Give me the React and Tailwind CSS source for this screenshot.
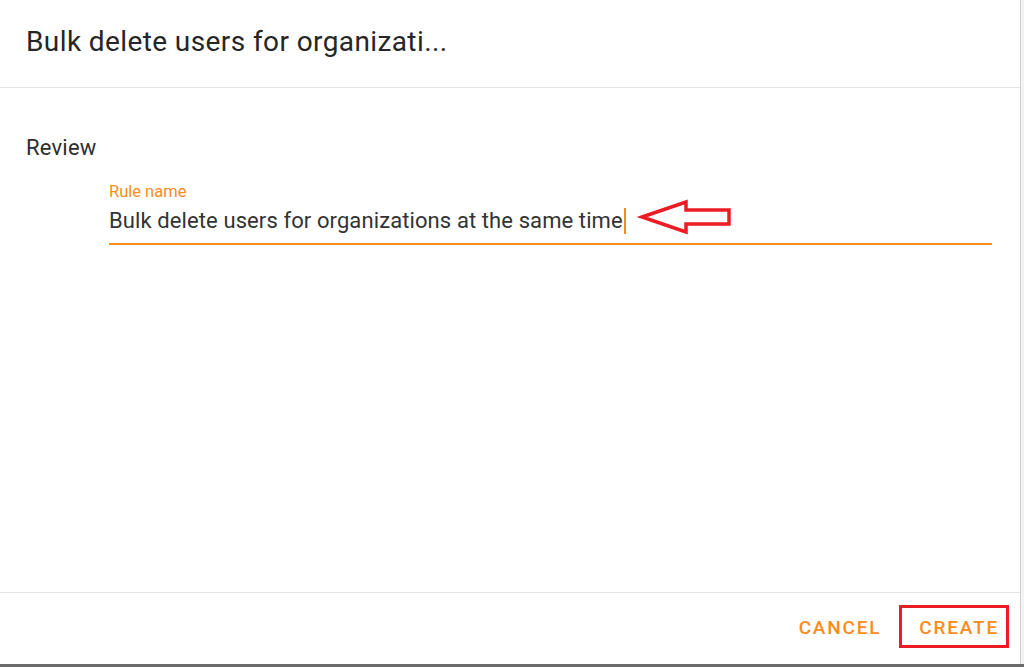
import React from "react";

export default function App() {
  const orange = "text-[#fb8c1c]";
  return (
    <div className="w-[1024px] h-[667px] flex flex-col bg-white overflow-hidden" style={{ fontFamily: "Roboto, 'Liberation Sans', sans-serif" }}>
      <div className="flex flex-1 min-h-0">
        <div className="relative flex flex-col flex-1 min-w-0 bg-white">
          {/* Header */}
          <div className="h-[88px] shrink-0 border-b border-[#e3e3e3] flex items-center pl-[26px] pb-[4px]">
            <h1 className="text-[28px] tracking-[0.4px] text-[#262626] leading-none">Bulk delete users for organizati...</h1>
          </div>
          {/* Body */}
          <div className="flex-1 flex flex-col">
            <div className="pl-[26px] pt-[49px] text-[22px] tracking-[0.2px] leading-none text-[#2e2e2e]">Review</div>
            <div className="ml-[109px] mr-[28px] mt-[25px] flex flex-col">
              <label className={`text-[16.5px] leading-none ${orange}`}>Rule name</label>
              <div className="mt-[7px] pb-[9px] border-b-2 border-[#fb8c1c] flex items-center">
                <span className="text-[22px] tracking-[0.1px] leading-[26px] text-[#333333]">Bulk delete users for organizations at the same time</span>
                <span className="w-[2px] h-[26px] bg-[#fb8c1c] ml-[1px]" />
              </div>
            </div>
          </div>
          {/* Footer */}
          <div className="h-[72px] shrink-0 border-t border-[#e3e3e3] flex items-center justify-end pr-[21px] gap-[38px]">
            <span className={`text-[19px] font-medium tracking-[1.8px] ${orange}`}>CANCEL</span>
            <span className={`text-[19px] font-medium tracking-[1.8px] ${orange}`}>CREATE</span>
          </div>

          {/* Annotation: arrow */}
          <svg className="absolute left-[636px] top-[197px]" width="100" height="42" viewBox="0 0 100 42">
            <polygon
              points="6,20 50,5 50,13 93,13 93,27 50,27 50,35"
              fill="none"
              stroke="#ec1c24"
              strokeWidth="3.5"
              strokeLinejoin="miter"
            />
          </svg>
          {/* Annotation: box around CREATE */}
          <div className="absolute left-[899px] top-[605px] w-[110px] h-[43px] border-[3px] border-[#ec1c24]" />
        </div>
        {/* right edge */}
        <div className="w-[4px] shrink-0 border-l border-[#cfcfcf] bg-[#f3f3f3]" />
      </div>
      <div className="h-[3px] shrink-0 bg-[#6b6b6b]" />
    </div>
  );
}
